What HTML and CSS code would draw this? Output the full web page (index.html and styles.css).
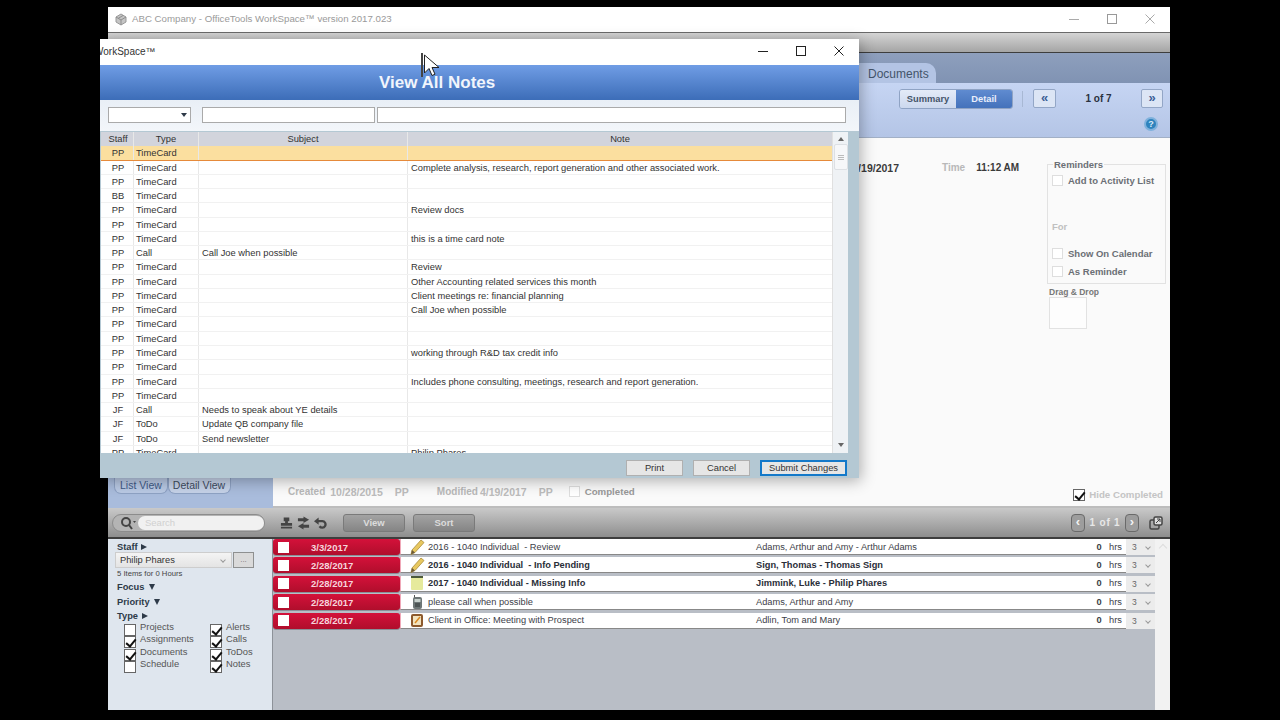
FILE: index.html
```html
<!DOCTYPE html>
<html lang="en">
<head>
  <meta charset="UTF-8">
  <title>OfficeTools WorkSpace</title>
  <link rel="stylesheet" href="styles.css">
</head>
<body>
  <div class="window">
    <div class="titlebar">
      <svg class="app-icon" width="14" height="14" viewBox="0 0 14 14"><path d="M2 5 7 2l5 3v5l-5 3-5-3z" fill="#c4c4c4" stroke="#999"/><path d="M2 5l5 3 5-3M7 8v5M4 6.500l5-3" fill="none" stroke="#8e8e8e"/></svg>
      <span class="title-text">ABC Company - OfficeTools WorkSpace™ version 2017.023</span>
      <div class="win-btns faint">
        <svg width="10" height="10" viewBox="0 0 10 10"><path d="M0 5.500h10" stroke="#aaa"/></svg>
        <svg width="10" height="10" viewBox="0 0 10 10"><rect x=".5" y=".5" width="9" height="9" fill="none" stroke="#999"/></svg>
        <svg width="10" height="10" viewBox="0 0 10 10"><path d="M.5.500l9 9M9.500.500l-9 9" stroke="#aaa"/></svg>
      </div>
    </div>
    <div class="menu-strip"></div>

    <div class="tab-strip">
      <div class="tab">Documents</div>
    </div>
    <div class="sub-header">
      <div class="sub-row">
        <div class="toggle">
          <span class="toggle-off">Summary</span>
          <span class="toggle-on">Detail</span>
        </div>
        <span class="sep"></span>
        <span class="nav-btn">«</span>
        <span class="pager">1 of 7</span>
        <span class="nav-btn">»</span>
      </div>
      <div class="help-row"><span class="help">?</span></div>
    </div>

    <div class="middle">
      <div class="left-panel">
        <div class="view-tabs">
          <span class="view-tab">List View</span>
          <span class="view-tab alt">Detail View</span>
        </div>
      </div>
      <div class="detail">
        <div class="detail-top">
          <div class="when">
            <span class="value date-val">4/19/2017</span>
            <span class="label time-label">Time</span>
            <span class="value time-val">11:12 AM</span>
          </div>
          <div class="side-col">
            <fieldset class="reminders">
              <legend>Reminders</legend>
              <div class="rem-row"><span class="rem-box"></span>Add to Activity List</div>
              <div class="rem-for">For</div>
              <div class="rem-row"><span class="rem-box"></span>Show On Calendar</div>
              <div class="rem-row"><span class="rem-box"></span>As Reminder</div>
            </fieldset>
            <div class="drag-label">Drag &amp; Drop</div>
            <div class="drag-box"></div>
          </div>
        </div>
        <div class="detail-foot">
          <span class="foot-label">Created</span><span class="foot-val">10/28/2015</span><span class="foot-val pp">PP</span>
          <span class="foot-label mod">Modified</span><span class="foot-val near">4/19/2017</span><span class="foot-val pp">PP</span>
          <span class="rem-box small"></span><span class="foot-label done">Completed</span>
          <span class="hide-done"><span class="check-box light"></span>Hide Completed</span>
        </div>
      </div>
    </div>

    <div class="toolbar">
      <div class="search">
        <svg width="16" height="14" viewBox="0 0 16 14"><circle cx="6" cy="6" r="4" fill="none" stroke="#444" stroke-width="2"/><path d="M9 9l3 4" stroke="#444" stroke-width="2"/><path d="M13 5h3l-1.500 2z" fill="#444"/></svg>
        <span class="search-field">Search</span>
      </div>
      <div class="tool-icons">
        <svg width="13" height="14" viewBox="0 0 14 14"><path d="M4 1h6v4H8.500v2H13v3H1V7h4.500V5H4zM1 11h12v2H1z" fill="#444"/></svg>
        <svg width="13" height="14" viewBox="0 0 14 14"><path d="M1 2h6V0l6 3.500L7 7V5H1zM13 9H7V7L1 10.500 7 14v-2h6z" fill="#444"/></svg>
        <svg width="13" height="14" viewBox="0 0 14 14"><path d="M4 5h5a3.500 3.500 0 1 1-3 5.500" fill="none" stroke="#444" stroke-width="2.500"/><path d="M5 1v8L0 5z" fill="#444"/></svg>
      </div>
      <span class="tool-btn">View</span>
      <span class="tool-btn">Sort</span>
      <div class="tool-pager">
        <span class="round-btn">‹</span><span class="tool-count">1 of 1</span><span class="round-btn">›</span>
        <svg class="popout" width="14" height="14" viewBox="0 0 14 14"><rect x="1" y="4" width="9" height="9" rx="1.500" fill="none" stroke="#444" stroke-width="1.500"/><rect x="5" y="1" width="8" height="8" rx="1.500" fill="#ddd" stroke="#444" stroke-width="1.500"/><path d="M7 7l4-4M8 3h3v3" fill="none" stroke="#444"/></svg>
      </div>
    </div>

    <div class="lower">
      <div class="filters">
        <div class="f-head">Staff <i class="tri-r"></i></div>
        <div class="staff-pick">
          <span class="staff-select">Philip Phares<i class="chev"></i></span>
          <span class="staff-more">...</span>
        </div>
        <div class="f-note">5 Items for 0 Hours</div>
        <div class="f-head big">Focus <i class="tri-d"></i></div>
        <div class="f-head big">Priority <i class="tri-d"></i></div>
        <div class="f-head big">Type <i class="tri-r"></i></div>
        <div class="type-grid">
          <div class="type-item"><span class="check-box blank"></span>Projects</div>
          <div class="type-item"><span class="check-box"></span>Alerts</div>
          <div class="type-item"><span class="check-box"></span>Assignments</div>
          <div class="type-item"><span class="check-box"></span>Calls</div>
          <div class="type-item"><span class="check-box"></span>Documents</div>
          <div class="type-item"><span class="check-box"></span>ToDos</div>
          <div class="type-item"><span class="check-box blank"></span>Schedule</div>
          <div class="type-item"><span class="check-box"></span>Notes</div>
        </div>
      </div>

      <div class="items">
        <div class="item">
          <div class="item-date"><span class="item-box"></span><span class="date-text">3/3/2017</span></div>
          <div class="item-body">
            <svg class="item-icon" width="16" height="16" viewBox="0 0 16 16"><path d="M12 1l3 2.500-9 10-4 2 1-4.500z" fill="#e8c860" stroke="#a98b3a" stroke-width=".8"/><path d="M2 15.500l1-4.500 3 2.500z" fill="#6b5a3a"/></svg>
            <span class="item-name">2016 - 1040 Individual  - Review</span>
            <span class="item-client">Adams, Arthur and Amy - Arthur Adams</span>
            <span class="item-hrs">0</span><span class="item-unit">hrs</span>
          </div>
          <div class="item-pri">3<i class="chev"></i></div>
        </div>
        <div class="item bold">
          <div class="item-date"><span class="item-box"></span><span class="date-text">2/28/2017</span></div>
          <div class="item-body">
            <svg class="item-icon" width="16" height="16" viewBox="0 0 16 16"><path d="M12 1l3 2.500-9 10-4 2 1-4.500z" fill="#e8c860" stroke="#a98b3a" stroke-width=".8"/><path d="M2 15.500l1-4.500 3 2.500z" fill="#6b5a3a"/></svg>
            <span class="item-name">2016 - 1040 Individual  - Info Pending</span>
            <span class="item-client">Sign, Thomas - Thomas Sign</span>
            <span class="item-hrs">0</span><span class="item-unit">hrs</span>
          </div>
          <div class="item-pri">3<i class="chev"></i></div>
        </div>
        <div class="item bold">
          <div class="item-date"><span class="item-box"></span><span class="date-text">2/28/2017</span></div>
          <div class="item-body">
            <svg class="item-icon" width="16" height="16" viewBox="0 0 16 16"><rect x="2" y="1" width="12" height="14" rx="1" fill="#e6ea9c"/><rect x="2" y="1" width="12" height="2" fill="#4c5a3c"/></svg>
            <span class="item-name">2017 - 1040 Individual - Missing Info</span>
            <span class="item-client">Jimmink, Luke - Philip Phares</span>
            <span class="item-hrs">0</span><span class="item-unit">hrs</span>
          </div>
          <div class="item-pri">3<i class="chev"></i></div>
        </div>
        <div class="item">
          <div class="item-date"><span class="item-box"></span><span class="date-text">2/28/2017</span></div>
          <div class="item-body">
            <svg class="item-icon" width="16" height="16" viewBox="0 0 16 16"><rect x="5" y="1" width="1" height="3" fill="#555"/><rect x="4" y="3" width="9" height="12" rx="2" fill="#6d7676"/><rect x="5.500" y="5" width="6" height="3" fill="#c6d0cc"/><path d="M6 10h5M6 12h5" stroke="#2f3535"/></svg>
            <span class="item-name">please call when possible</span>
            <span class="item-client">Adams, Arthur and Amy</span>
            <span class="item-hrs">0</span><span class="item-unit">hrs</span>
          </div>
          <div class="item-pri">3<i class="chev"></i></div>
        </div>
        <div class="item">
          <div class="item-date"><span class="item-box"></span><span class="date-text">2/28/2017</span></div>
          <div class="item-body">
            <svg class="item-icon" width="16" height="16" viewBox="0 0 16 16"><rect x="2" y="2" width="12" height="13" rx="2" fill="#8d5a2e"/><rect x="4" y="4" width="8" height="9" fill="#f3e4c0"/><path d="M6 11l5-6" stroke="#d98a24" stroke-width="1.500"/></svg>
            <span class="item-name">Client in Office: Meeting with Prospect</span>
            <span class="item-client">Adlin, Tom and Mary</span>
            <span class="item-hrs">0</span><span class="item-unit">hrs</span>
          </div>
          <div class="item-pri">3<i class="chev"></i></div>
        </div>
      </div>
      <div class="items-scroll"><i class="up-faint"></i></div>
    </div>
  </div>

  <div class="dialog">
    <div class="dlg-title">
      <span class="dlg-title-text">WorkSpace™</span>
      <div class="win-btns">
        <svg width="10" height="10" viewBox="0 0 10 10"><path d="M0 5.500h10" stroke="#222"/></svg>
        <svg width="10" height="10" viewBox="0 0 10 10"><rect x=".5" y=".5" width="9" height="9" fill="none" stroke="#222"/></svg>
        <svg width="10" height="10" viewBox="0 0 10 10"><path d="M.5.500l9 9M9.500.500l-9 9" stroke="#222"/></svg>
      </div>
    </div>
    <div class="dlg-banner">View All Notes</div>
    <div class="dlg-filters">
      <span class="filter-select"><i class="tri-d small"></i></span>
      <span class="filter-input subj"></span>
      <span class="filter-input note"></span>
    </div>
    <div class="grid-wrap">
      <div class="grid">
        <div class="g-row g-head"><span class="c-staff">Staff</span><span class="c-type">Type</span><span class="c-subj">Subject</span><span class="c-note">Note</span></div>
        <div class="g-row current"><span class="c-staff">PP</span><span class="c-type">TimeCard</span><span class="c-subj"></span><span class="c-note"></span></div>
        <div class="g-row"><span class="c-staff">PP</span><span class="c-type">TimeCard</span><span class="c-subj"></span><span class="c-note">Complete analysis, research, report generation and other associated work.</span></div>
        <div class="g-row"><span class="c-staff">PP</span><span class="c-type">TimeCard</span><span class="c-subj"></span><span class="c-note"></span></div>
        <div class="g-row"><span class="c-staff">BB</span><span class="c-type">TimeCard</span><span class="c-subj"></span><span class="c-note"></span></div>
        <div class="g-row"><span class="c-staff">PP</span><span class="c-type">TimeCard</span><span class="c-subj"></span><span class="c-note">Review docs</span></div>
        <div class="g-row"><span class="c-staff">PP</span><span class="c-type">TimeCard</span><span class="c-subj"></span><span class="c-note"></span></div>
        <div class="g-row"><span class="c-staff">PP</span><span class="c-type">TimeCard</span><span class="c-subj"></span><span class="c-note">this is a time card note</span></div>
        <div class="g-row"><span class="c-staff">PP</span><span class="c-type">Call</span><span class="c-subj">Call Joe when possible</span><span class="c-note"></span></div>
        <div class="g-row"><span class="c-staff">PP</span><span class="c-type">TimeCard</span><span class="c-subj"></span><span class="c-note">Review</span></div>
        <div class="g-row"><span class="c-staff">PP</span><span class="c-type">TimeCard</span><span class="c-subj"></span><span class="c-note">Other Accounting related services this month</span></div>
        <div class="g-row"><span class="c-staff">PP</span><span class="c-type">TimeCard</span><span class="c-subj"></span><span class="c-note">Client meetings re: financial planning</span></div>
        <div class="g-row"><span class="c-staff">PP</span><span class="c-type">TimeCard</span><span class="c-subj"></span><span class="c-note">Call Joe when possible</span></div>
        <div class="g-row"><span class="c-staff">PP</span><span class="c-type">TimeCard</span><span class="c-subj"></span><span class="c-note"></span></div>
        <div class="g-row"><span class="c-staff">PP</span><span class="c-type">TimeCard</span><span class="c-subj"></span><span class="c-note"></span></div>
        <div class="g-row"><span class="c-staff">PP</span><span class="c-type">TimeCard</span><span class="c-subj"></span><span class="c-note">working through R&amp;D tax credit info</span></div>
        <div class="g-row"><span class="c-staff">PP</span><span class="c-type">TimeCard</span><span class="c-subj"></span><span class="c-note"></span></div>
        <div class="g-row"><span class="c-staff">PP</span><span class="c-type">TimeCard</span><span class="c-subj"></span><span class="c-note">Includes phone consulting, meetings, research and report generation.</span></div>
        <div class="g-row"><span class="c-staff">PP</span><span class="c-type">TimeCard</span><span class="c-subj"></span><span class="c-note"></span></div>
        <div class="g-row"><span class="c-staff">JF</span><span class="c-type">Call</span><span class="c-subj">Needs to speak about YE details</span><span class="c-note"></span></div>
        <div class="g-row"><span class="c-staff">JF</span><span class="c-type">ToDo</span><span class="c-subj">Update QB company file</span><span class="c-note"></span></div>
        <div class="g-row"><span class="c-staff">JF</span><span class="c-type">ToDo</span><span class="c-subj">Send newsletter</span><span class="c-note"></span></div>
        <div class="g-row"><span class="c-staff">PP</span><span class="c-type">TimeCard</span><span class="c-subj"></span><span class="c-note">Philip Phares</span></div>
      </div>
      <div class="g-scroll">
        <i class="arrow-up"></i>
        <span class="g-thumb"><i class="grip"></i></span>
        <i class="arrow-down"></i>
      </div>
    </div>
    <div class="dlg-actions">
      <span class="dlg-btn">Print</span>
      <span class="dlg-btn">Cancel</span>
      <span class="dlg-btn primary">Submit Changes</span>
    </div>
  </div>

  <svg class="cursor" width="22" height="27" viewBox="0 0 22 27"><path d="M1 0h2v24H1z" fill="#444"/><path d="M4.500 2v18l4.500-4.500 3 7 3-1.300-3-6.700H19z" fill="#fff" stroke="#222" stroke-width="1"/></svg>
</body>
</html>
```

FILE: styles.css
```css
* {
  box-sizing: border-box;
}

html, body {
  height: 100%;
}

body {
  margin: 0;
  background-color: #000;
  font-family: "Liberation Sans", Arial, sans-serif;
  font-size: 10px;
  color: #333;
  overflow: hidden;
}

i {
  display: inline-block;
}

.window {
  width: 1062px;
  height: 703px;
  margin: 7px 0 0 108px;
  background-color: #fafafa;
  display: flex;
  flex-direction: column;
}

.titlebar {
  height: 26px;
  flex: none;
  background-color: #fff;
  border-bottom: 1px solid #6a6a6a;
  display: flex;
  align-items: center;
  padding: 0 0 2px 6px;
}

.app-icon {
  margin-right: 4px;
}

.title-text {
  font-size: 9.700px;
  color: #9a9a9a;
}

.win-btns {
  margin-left: auto;
  display: flex;
  gap: 28px;
  padding-right: 15px;
}

.menu-strip {
  height: 20px;
  flex: none;
  background: linear-gradient(#d4d4d4, #a5a5a5);
  border-bottom: 1px solid #3d3d3d;
}

.tab-strip {
  height: 30px;
  flex: none;
  background: linear-gradient(#8e9fbd, #8093b3);
  display: flex;
  align-items: flex-end;
  padding-left: 742px;
}

.tab {
  width: 86px;
  height: 20px;
  background-color: #b3c4e4;
  border-radius: 8px 10px 0 0;
  font-size: 12px;
  color: #44546a;
  line-height: 22px;
  padding-left: 18px;
}

.sub-header {
  height: 55px;
  flex: none;
  background: linear-gradient(#c6d5f3, #b4c5e6);
  border-bottom: 1px solid #a2b0c6;
  position: relative;
}

.sub-row {
  height: 32px;
  display: flex;
  align-items: center;
  padding: 0 0 1px 791px;
}

.toggle {
  width: 114px;
  height: 20px;
  display: flex;
  border: 1px solid #8fa3c4;
  border-radius: 3px;
  font-size: 9.300px;
  font-weight: bold;
  overflow: hidden;
}

.toggle-off {
  width: 56px;
  background: linear-gradient(#e4ebf8, #ccd8ee);
  color: #44546a;
  text-align: center;
  line-height: 18px;
}

.toggle-on {
  flex: 1;
  background: linear-gradient(#5f8bd0, #4472bb);
  color: #e8eefb;
  text-align: center;
  line-height: 18px;
}

.sep {
  width: 1px;
  height: 16px;
  background-color: #a8b8d4;
  margin: 0 10px 0 9px;
}

.nav-btn {
  width: 23px;
  height: 19px;
  border: 1px solid #93a6c6;
  border-radius: 2px;
  background-color: #dce5f5;
  color: #3c5f95;
  font-size: 13px;
  font-weight: bold;
  line-height: 15px;
  text-align: center;
}

.pager {
  width: 85px;
  text-align: center;
  font-size: 10px;
  font-weight: bold;
  color: #2a3140;
}

.pager + .nav-btn {
  width: 22px;
}

.help-row {
  display: flex;
  justify-content: flex-end;
  padding: 2px 12px 0 0;
}

.help {
  width: 14px;
  height: 14px;
  border-radius: 50%;
  border: 2px solid #7fb1dc;
  background-color: #2f83bd;
  color: #dcecf8;
  font-size: 9px;
  font-weight: bold;
  line-height: 10px;
  text-align: center;
}

.middle {
  height: 370px;
  flex: none;
  display: flex;
}

.left-panel {
  width: 165px;
  flex: none;
  background-color: #a9bcdc;
  display: flex;
  flex-direction: column;
  justify-content: flex-end;
}

.view-tabs {
  display: flex;
  padding: 0 0 14px 6px;
}

.view-tab {
  height: 16px;
  padding: 0 5px;
  background-color: #b9c9e4;
  border: 1px solid #8ea2c4;
  border-top: none;
  border-radius: 0 0 7px 7px;
  font-size: 10.500px;
  line-height: 14px;
  color: #3f5a86;
}

.view-tab.alt {
  padding-left: 4px;
  background-color: #c5d2e8;
  color: #3d4b5e;
}

.detail {
  flex: 1;
  display: flex;
  flex-direction: column;
  background-color: #fafafa;
  border-bottom: 2px solid #bdbdbd;
}

.detail-top {
  flex: 1;
  display: flex;
  padding-top: 22px;
}

.when {
  display: flex;
  align-items: flex-start;
  padding: 2px 0 0 535px;
  width: 773px;
}

.value {
  font-size: 10.500px;
  font-weight: bold;
  color: #3a3a3a;
}

.time-val {
  font-size: 10px;
  margin-left: -1px;
}

.date-val {
  width: 91px;
  text-align: right;
}

.label, .foot-label {
  color: #b8b8b8;
  font-weight: bold;
}

.time-label {
  font-size: 10px;
  margin: 0 12px 0 43px;
}

.side-col {
  width: 120px;
  margin-left: 1px;
}

.reminders {
  width: 119px;
  height: 125px;
  margin: -1px 0 0;
  padding: 1px 0 0 4px;
  border: 1px solid #e2e2e2;
  color: #6b6f75;
  font-weight: bold;
  font-size: 9.500px;
}

.reminders legend {
  padding: 0 1px;
  margin-left: 1px;
  font-size: 9.500px;
}

.rem-row {
  height: 18px;
  display: flex;
  align-items: center;
  gap: 5px;
}

.rem-box {
  width: 11px;
  height: 11px;
  border: 1px solid #dedede;
  background-color: #fff;
  flex: none;
}

.rem-for {
  height: 46px;
  padding-top: 32px;
  color: #c0c0c0;
  margin-bottom: 9px;
}

.drag-label {
  margin: 3px 0 0 2px;
  font-size: 8.500px;
  font-weight: bold;
  color: #777;
}

.drag-box {
  width: 38px;
  height: 32px;
  margin: 0 0 0 2px;
  border: 1px solid #e2e2e2;
  background-color: #fdfdfd;
}

.detail-foot {
  height: 29px;
  flex: none;
  display: flex;
  align-items: center;
  padding: 0 7px 0 15px;
  font-size: 10px;
}

.foot-val {
  color: #bcbcbc;
  font-weight: bold;
  font-size: 10.500px;
  margin-left: 5px;
}

.foot-val.near {
  margin-left: 2px;
}

.foot-val.pp {
  margin-left: 12px;
}

.foot-label.mod {
  margin-left: 28px;
}

.detail-foot .rem-box.small {
  margin-left: 16px;
}

.foot-label.done {
  margin-left: 5px;
  color: #999;
  font-size: 9.700px;
}

.hide-done {
  margin: 5px 0 0 auto;
  display: flex;
  align-items: center;
  gap: 4px;
  color: #c4c4c4;
  font-size: 9.700px;
  font-weight: bold;
}

.check-box {
  width: 12px;
  height: 12px;
  flex: none;
  border: 1px solid #666;
  background-color: #fff;
  position: relative;
  margin-top: 2px;
}

.check-box::after {
  content: "";
  position: absolute;
  left: 3px;
  top: 0;
  width: 4px;
  height: 8px;
  border: solid #111;
  border-width: 0 2px 2px 0;
  transform: rotate(40deg);
}

.check-box.blank::after {
  display: none;
}

.toolbar {
  height: 31px;
  flex: none;
  background: linear-gradient(#c9c9c9, #8e8e8e);
  border-bottom: 2px solid #3e3e3e;
  display: flex;
  align-items: center;
  padding: 0 7px 0 4px;
}

.search {
  width: 153px;
  height: 18px;
  border-radius: 9px;
  background-color: #b4b4b4;
  border: 1px solid #8c8c8c;
  display: flex;
  align-items: center;
  padding-left: 7px;
  gap: 2px;
}

.search-field {
  flex: 1;
  height: 14px;
  border-radius: 7px;
  background-color: #f1f1f1;
  color: #d0d0d0;
  font-size: 9.500px;
  line-height: 14px;
  padding-left: 7px;
}

.tool-icons {
  display: flex;
  gap: 4px;
  margin: 0 16px 0 15px;
}

.tool-btn {
  width: 62px;
  height: 18px;
  margin-right: 8px;
  border: 1px solid #7a7a7a;
  border-radius: 3px;
  background: linear-gradient(#a3a3a3, #858585);
  color: #dcdcdc;
  font-size: 9.500px;
  font-weight: bold;
  line-height: 16px;
  text-align: center;
}

.tool-pager {
  margin-left: auto;
  display: flex;
  align-items: center;
  color: #e8e8e8;
  font-weight: bold;
}

.round-btn {
  width: 14px;
  height: 18px;
  border: 1px solid #6a6a6a;
  border-radius: 4px;
  background-color: #9d9d9d;
  color: #f4f4f4;
  font-size: 13px;
  line-height: 14px;
  text-align: center;
}

.tool-count {
  width: 40px;
  text-align: center;
  letter-spacing: .8px;
}

.popout {
  margin-left: 10px;
}

.lower {
  flex: 1;
  display: flex;
  min-height: 0;
  background-color: #b9bec6;
}

.filters {
  width: 165px;
  flex: none;
  background-color: #dfe6ee;
  border-right: 1px solid #8d9299;
  padding: 3px 0 0 9px;
  color: #2e3a48;
}

.f-head {
  font-weight: bold;
  font-size: 9.300px;
  line-height: 11px;
}

.f-head.big {
  margin-top: 4px;
  line-height: 10.500px;
}

.tri-r {
  width: 0;
  height: 0;
  border-left: 6px solid #2e3a48;
  border-top: 3px solid transparent;
  border-bottom: 3px solid transparent;
  margin-left: 1px;
}

.tri-d {
  width: 0;
  height: 0;
  border-top: 6px solid #2e3a48;
  border-left: 3px solid transparent;
  border-right: 3px solid transparent;
  margin-left: 2px;
}

.tri-d.small {
  border-top-width: 4px;
}

.chev {
  width: 4px;
  height: 4px;
  border: solid #999;
  border-width: 0 1px 1px 0;
  transform: rotate(45deg);
}

.staff-pick {
  display: flex;
  margin: -1px 0 0 -2px;
}

.staff-select {
  width: 117px;
  height: 16px;
  background: linear-gradient(#f4f4f4, #e4e4e4);
  border: 1px solid #cdcdcd;
  font-size: 9.300px;
  line-height: 14px;
  padding: 0 6px 0 4px;
  display: flex;
  align-items: center;
  justify-content: space-between;
  color: #333;
}

.staff-more {
  width: 21px;
  height: 16px;
  margin-left: 1px;
  border: 1px solid #8e9090;
  background-color: #dadada;
  color: #777;
  font-size: 8px;
  line-height: 14px;
  text-align: center;
}

.f-note {
  font-size: 7.700px;
  margin: 1px 0 0;
  color: #444;
}

.type-grid {
  display: grid;
  grid-template-columns: 86px 50px;
  grid-auto-rows: 12.500px;
  margin-left: 7px;
}

.type-item {
  display: flex;
  gap: 4px;
  line-height: 10px;
  color: #555;
  font-size: 9.400px;
}

.items {
  width: 882px;
  flex: none;
}

.item {
  height: 18.400px;
  display: flex;
  font-size: 9.250px;
}

.item-date {
  width: 127px;
  height: 16px;
  flex: none;
  background: linear-gradient(#d4113a, #b00e2c);
  border-radius: 3px;
  display: flex;
  align-items: center;
  padding-left: 5px;
  box-shadow: 0 1px 0 #8a8f98;
}

.item-box {
  width: 11px;
  height: 11px;
  background-color: #fff;
  flex: none;
}

.date-text {
  padding-left: 22px;
  color: #f6d5dc;
  font-weight: bold;
  font-size: 9.500px;
}

.item-body {
  width: 726px;
  flex: none;
  height: 16px;
  background-color: #fff;
  display: flex;
  align-items: center;
  border-left: 1px solid #f0a8b8;
  border-bottom: 1px solid #888;
  white-space: pre;
  color: #3c4048;
}

.item-icon {
  flex: none;
  margin-left: 8px;
  margin-right: 3px;
}

.item-name {
  width: 328px;
  flex: none;
}

.item-client {
  width: 337px;
  flex: none;
}

.item-hrs {
  width: 12px;
  text-align: center;
  font-weight: bold;
}

.item-unit {
  margin-left: 4px;
}

.item.bold .item-name, .item.bold .item-client {
  font-weight: bold;
  color: #2a2e38;
}

.item-pri {
  width: 29px;
  height: 16px;
  flex: none;
  background-color: #ececec;
  color: #666;
  font-size: 8.500px;
  padding: 0 5px 0 6px;
  display: flex;
  align-items: center;
  justify-content: space-between;
}

.items-scroll {
  flex: 1;
  background-color: #f2f2f2;
  display: flex;
  justify-content: center;
  padding-top: 6px;
}

.up-faint {
  width: 6px;
  height: 6px;
  border: solid #ddd;
  border-width: 1px 0 0 1px;
  transform: rotate(45deg);
}

/* dialog floats over the main window */
.dialog {
  position: absolute;
  left: 100px;
  top: 39px;
  width: 759px;
  height: 439px;
  background-color: #b4c8d3;
  box-shadow: 2px 3px 14px rgba(0, 0, 0, .3);
  display: flex;
  flex-direction: column;
}

.dlg-title {
  height: 26px;
  flex: none;
  background-color: #fff;
  display: flex;
  align-items: center;
  overflow: hidden;
  padding-bottom: 2px;
}

.dlg-title-text {
  margin-left: -6px;
  font-size: 10px;
  color: #333;
}

.dlg-banner {
  height: 35px;
  flex: none;
  background: linear-gradient(#709de5, #3c6db8);
  color: #f1f5fc;
  font-size: 17px;
  font-weight: bold;
  line-height: 35px;
  padding-left: 279px;
}

.dlg-filters {
  height: 31px;
  flex: none;
  background: linear-gradient(#e9eff6, #f3f6fa);
  display: flex;
  align-items: center;
  padding: 0 13px 2px 8px;
}

.filter-select {
  width: 83px;
  height: 16px;
  background-color: #fff;
  border: 1px solid #aaa;
  display: flex;
  justify-content: flex-end;
  align-items: center;
  padding-right: 3px;
}

.filter-input {
  height: 16px;
  background-color: #fff;
  border: 1px solid #aaa;
}

.filter-input.subj {
  width: 173px;
  margin: 0 2px 0 11px;
}

.filter-input.note {
  flex: 1;
}

.grid-wrap {
  height: 321px;
  flex: none;
  margin: 1px 11px 0 1px;
  display: flex;
  background-color: #fff;
  overflow: hidden;
}

.grid {
  flex: 1;
  min-width: 0;
}

.g-row {
  height: 14.270px;
  display: flex;
  line-height: 14px;
  font-size: 9.350px;
  color: #333;
  border-bottom: 1px solid #f1f1f1;
  white-space: nowrap;
}

.g-row span {
  flex: none;
  border-right: 1px solid #e8e8e8;
  overflow: hidden;
}

.g-head {
  background-color: #d2d4dc;
  text-align: center;
  border-bottom: none;
}

.current {
  background-color: #fbdf9f;
  border-bottom: 1px solid #e68a3a;
}

.c-staff {
  width: 33px;
  text-align: center;
  padding-left: 2px;
}

.c-type {
  width: 65px;
  padding-left: 2px;
}

.c-subj {
  width: 209px;
  padding-left: 3px;
}

.c-note {
  width: 424px;
  padding-left: 3px;
  border-right: none !important;
}

.g-head .c-type, .g-head .c-subj, .g-head .c-note {
  padding-left: 0;
}

.g-scroll {
  width: 16px;
  flex: none;
  background-color: #eff2f5;
  display: flex;
  flex-direction: column;
  align-items: center;
  padding: 5px 0 6px;
  border-left: 1px solid #e0e0e0;
}

.g-thumb {
  width: 14px;
  height: 26px;
  margin-top: 3px;
  background-color: #f6f7f9;
  border: 1px solid #dde0e4;
  border-radius: 2px;
  display: flex;
  align-items: center;
  justify-content: center;
}

.grip {
  width: 6px;
  height: 5px;
  border-top: 1px solid #bbb;
  border-bottom: 1px solid #bbb;
  background: linear-gradient(transparent 1px, #bbb 1px, #bbb 2px, transparent 2px);
}

.arrow-up, .arrow-down {
  width: 0;
  height: 0;
  border-left: 3px solid transparent;
  border-right: 3px solid transparent;
}

.arrow-up {
  border-bottom: 4px solid #666;
}

.arrow-down {
  border-top: 4px solid #666;
  margin-top: auto;
}

.dlg-actions {
  flex: 1;
  display: flex;
  justify-content: flex-end;
  align-items: center;
  gap: 10px;
  padding: 4px 12px 0 0;
}

.dlg-btn {
  width: 57px;
  height: 16px;
  background-color: #e6e6e6;
  border: 1px solid #b0b0b0;
  color: #333;
  text-align: center;
  font-size: 9.350px;
  line-height: 14px;
}

.dlg-btn.primary {
  width: 87px;
  border: 2px solid #1479c9;
  line-height: 12px;
}

.cursor {
  position: absolute;
  left: 420px;
  top: 53px;
}
```
